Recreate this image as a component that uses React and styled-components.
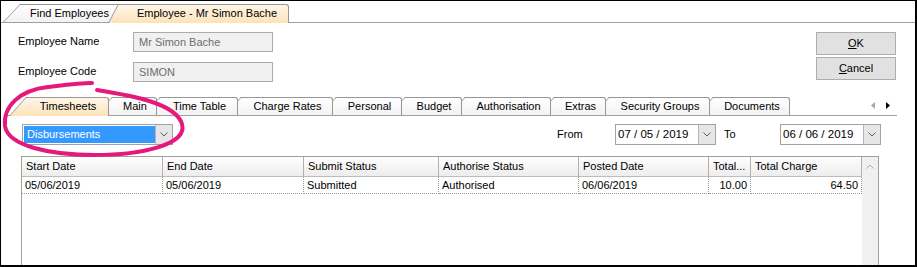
import React from "react";
import styled, { createGlobalStyle } from "styled-components";

const GlobalStyle = createGlobalStyle`
  body {
    margin: 0;
    background: #ffffff;
    font-family: "Liberation Sans", Arial, sans-serif;
    font-size: 11px;
    color: #000000;
  }
`;

const Window = styled.div`
  position: relative;
  width: 917px;
  height: 267px;
  box-sizing: border-box;
  border-style: solid;
  border-color: #000000;
  border-width: 1px 2px 2px 1px;
  background: #ffffff;
  overflow: hidden;
  display: flex;
  flex-direction: column;
`;

const TopStrip = styled.div`
  display: flex;
  align-items: flex-end;
  flex-shrink: 0;
  height: 18px;
  padding-top: 3px;
  border-bottom: 1px solid #a0a0a0;
`;

const Tab = styled.div`
  position: relative;
  z-index: ${(p) => (p.$active ? 50 : 40 - p.$index)};
  box-sizing: border-box;
  flex-shrink: 0;
  width: ${(p) => p.$width}px;
  height: ${(p) => p.$h + (p.$active ? 1 : 0)}px;
  margin-bottom: ${(p) => (p.$active ? -1 : 0)}px;
  margin-left: ${(p) => p.$gap}px;
  padding-left: ${(p) => p.$padLeft || 0}px;
  border-top: 1px solid #979797;
  border-right: 1px solid #979797;
  border-top-right-radius: 3px;
  background: ${(p) =>
    p.$active
      ? "linear-gradient(#fff6e9, #fde2b9)"
      : "linear-gradient(#ffffff, #f2f2f2)"};
  text-align: center;
  line-height: ${(p) => p.$h - 2}px;
  white-space: nowrap;

  &::before {
    content: "";
    position: absolute;
    z-index: -1;
    top: -1px;
    bottom: 0;
    left: ${(p) => -p.$slant}px;
    width: ${(p) => p.$slant + 8}px;
    background: inherit;
    border-top: 1px solid #979797;
    border-left: 1px solid #979797;
    transform-origin: bottom left;
    transform: skewX(
      ${(p) =>
        (-Math.atan(p.$slant / (p.$h + (p.$active ? 1 : 0))) * 180) / Math.PI}deg
    );
  }
`;

const FormArea = styled.div`
  display: flex;
  justify-content: space-between;
  flex-shrink: 0;
  padding: 9px 19px 0 17px;
`;

const Fields = styled.div`
  display: flex;
  flex-direction: column;
  gap: 10px;
`;

const FieldRow = styled.div`
  display: flex;
  align-items: center;
  height: 20px;
`;

const FieldLabel = styled.div`
  width: 115px;
  margin-top: -3px;
`;

const TextBox = styled.div`
  width: 140px;
  height: 20px;
  box-sizing: border-box;
  border: 1px solid #ababab;
  background: #f0f0f0;
  color: #6d6d6d;
  padding-left: 5px;
  line-height: 18px;
`;

const Buttons = styled.div`
  display: flex;
  flex-direction: column;
  gap: 2px;
`;

const Button = styled.div`
  width: 80px;
  height: 23px;
  box-sizing: border-box;
  border: 1px solid #adadad;
  background: #e1e1e1;
  text-align: center;
  line-height: 20px;
`;

const InnerStrip = styled.div`
  display: flex;
  align-items: flex-end;
  flex-shrink: 0;
  height: 18px;
  margin: 15px 18px 0 7px;
  border-bottom: 1px solid #a0a0a0;
`;

const ScrollArrows = styled.div`
  display: flex;
  align-items: center;
  gap: 11px;
  margin-left: auto;
  align-self: center;
  padding-right: 7px;
  margin-top: -2px;
`;

const FilterRow = styled.div`
  display: flex;
  align-items: center;
  flex-shrink: 0;
  height: 21px;
  margin: 8px 34px 0 21px;
`;

const Combo = styled.div`
  display: flex;
  width: 151px;
  height: 21px;
  box-sizing: border-box;
  border: 1px solid #a2a2a2;
  background: #ffffff;
  padding: 1px 0 1px 1px;
`;

const ComboText = styled.div`
  flex: 1;
  background: #3399ff;
  color: #ffffff;
  padding-left: 3px;
  line-height: 17px;
`;

const DropButton = styled.div`
  width: 16px;
  margin-top: -1px;
  margin-bottom: -1px;
  display: flex;
  align-items: center;
  justify-content: center;
  background: #e6e6e6;
  border-left: 1px solid #b4b4b4;
`;

const DateGroup = styled.div`
  display: flex;
  align-items: center;
  margin-left: auto;
`;

const DateLabel = styled.span`
  width: ${(p) => p.$w}px;
  margin-left: ${(p) => p.$ml || 0}px;
  margin-top: -2px;
`;

const DatePicker = styled.div`
  display: flex;
  width: 101px;
  height: 21px;
  box-sizing: border-box;
  border: 1px solid #a2a2a2;
  padding: 1px 0 1px 0;
  background: #ffffff;
`;

const DateText = styled.div`
  flex: 1;
  padding-left: 2px;
  line-height: 17px;
  font-size: 11.5px;
`;

const Grid = styled.div`
  display: flex;
  flex-shrink: 0;
  width: 858px;
  height: 130px;
  box-sizing: border-box;
  margin: 11px 0 0 20px;
  border: 1px solid #a0a0a0;
  background: #ffffff;
`;

const COLUMNS = "141px 141px 135px 140px 130px 42px 111px";

const GridTable = styled.div`
  width: 840px;
`;

const HeaderRow = styled.div`
  display: grid;
  grid-template-columns: ${COLUMNS};
  height: 20px;
  box-sizing: border-box;
  border-bottom: 1px solid #bcbcbc;
  background: linear-gradient(#fefefe, #ededed);
`;

const HeaderCell = styled.div`
  padding-left: 4px;
  line-height: 19px;
  border-right: 1px solid #b0b0b0;
  white-space: nowrap;
  overflow: hidden;
`;

const DataRow = styled.div`
  display: grid;
  grid-template-columns: ${COLUMNS};
  height: 17px;
`;

const DataCell = styled.div`
  box-sizing: border-box;
  padding: 0 3px;
  line-height: 16px;
  border-right: 1px dotted #9a9a9a;
  border-bottom: 1px dotted #9a9a9a;
  text-align: ${(p) => (p.$right ? "right" : "left")};
  white-space: nowrap;
  overflow: hidden;
`;

const ScrollBar = styled.div`
  width: 16px;
  background: #f0f0f0;
  display: flex;
  justify-content: center;
  padding-top: 7px;
  box-sizing: border-box;
`;

const Annotation = styled.svg`
  position: absolute;
  left: -1px;
  top: -1px;
  z-index: 100;
  pointer-events: none;
`;

const Chevron = ({ color = "#5f5f5f", up = false }) => (
  <svg width="8" height="5" viewBox="0 0 8 5">
    <polyline
      points={up ? "0.5,4.5 4,1 7.5,4.5" : "0.5,0.5 4,4 7.5,0.5"}
      fill="none"
      stroke={color}
      strokeWidth="1"
    />
  </svg>
);

const innerTabs = [
  { label: "Timesheets", width: 83, active: true },
  { label: "Main", width: 45 },
  { label: "Time Table", width: 78 },
  { label: "Charge Rates", width: 92 },
  { label: "Personal", width: 66 },
  { label: "Budget", width: 57 },
  { label: "Authorisation", width: 86 },
  { label: "Extras", width: 52 },
  { label: "Security Groups", width: 101 },
  { label: "Documents", width: 77 },
];

const headers = [
  "Start Date",
  "End Date",
  "Submit Status",
  "Authorise Status",
  "Posted Date",
  "Total...",
  "Total Charge",
];

const row = [
  { v: "05/06/2019" },
  { v: "05/06/2019" },
  { v: "Submitted" },
  { v: "Authorised" },
  { v: "06/06/2019" },
  { v: "10.00", right: true },
  { v: "64.50", right: true },
];

const App = () => {
  return (
    <>
      <GlobalStyle />
      <Window>
        <TopStrip>
          <Tab $index={0} $h={18} $slant={17} $gap={19} $width={100}>
            Find Employees
          </Tab>
          <Tab
            $index={1}
            $active
            $h={18}
            $slant={10}
            $gap={-2}
            $width={171}
            $padLeft={8}
          >
            Employee - Mr Simon Bache
          </Tab>
        </TopStrip>

        <FormArea>
          <Fields>
            <FieldRow>
              <FieldLabel>Employee Name</FieldLabel>
              <TextBox>Mr Simon Bache</TextBox>
            </FieldRow>
            <FieldRow>
              <FieldLabel>Employee Code</FieldLabel>
              <TextBox>SIMON</TextBox>
            </FieldRow>
          </Fields>
          <Buttons>
            <Button>
              <u>O</u>K
            </Button>
            <Button>
              <u>C</u>ancel
            </Button>
          </Buttons>
        </FormArea>

        <InnerStrip>
          {innerTabs.map((t, i) => (
            <Tab
              key={t.label}
              $index={i}
              $active={t.active}
              $h={18}
              $slant={17}
              $gap={i === 0 ? 18 : 3}
              $width={t.width}
              $padLeft={2}
            >
              {t.label}
            </Tab>
          ))}
          <ScrollArrows>
            <svg width="4" height="7" viewBox="0 0 4 7">
              <polygon points="4,0 0,3.5 4,7" fill="#a6a6a6" />
            </svg>
            <svg width="4" height="7" viewBox="0 0 4 7">
              <polygon points="0,0 4,3.5 0,7" fill="#000000" />
            </svg>
          </ScrollArrows>
        </InnerStrip>

        <FilterRow>
          <Combo>
            <ComboText>Disbursements</ComboText>
            <DropButton>
              <Chevron />
            </DropButton>
          </Combo>
          <DateGroup>
            <DateLabel $w={58}>From</DateLabel>
            <DatePicker>
              <DateText>07 / 05 / 2019</DateText>
              <DropButton>
                <Chevron />
              </DropButton>
            </DatePicker>
            <DateLabel $w={56} $ml={8}>
              To
            </DateLabel>
            <DatePicker>
              <DateText>06 / 06 / 2019</DateText>
              <DropButton>
                <Chevron />
              </DropButton>
            </DatePicker>
          </DateGroup>
        </FilterRow>

        <Grid>
          <GridTable>
            <HeaderRow>
              {headers.map((h) => (
                <HeaderCell key={h}>{h}</HeaderCell>
              ))}
            </HeaderRow>
            <DataRow>
              {row.map((c, i) => (
                <DataCell key={i} $right={c.right}>
                  {c.v}
                </DataCell>
              ))}
            </DataRow>
          </GridTable>
          <ScrollBar>
            <Chevron up color="#a6a6a6" />
          </ScrollBar>
        </Grid>

        <Annotation width="917" height="267" viewBox="0 0 917 267">
          <path
            d="M97 90 C135 96 176 104 182 124 C188 145 140 155 95 155 C50 155 8 146 5 126 C3 106 20 90 48 87 C65 85 80 83 92 83"
            fill="none"
            stroke="#e5197c"
            strokeWidth="4"
            strokeLinecap="round"
          />
        </Annotation>
      </Window>
    </>
  );
};

export default App;
